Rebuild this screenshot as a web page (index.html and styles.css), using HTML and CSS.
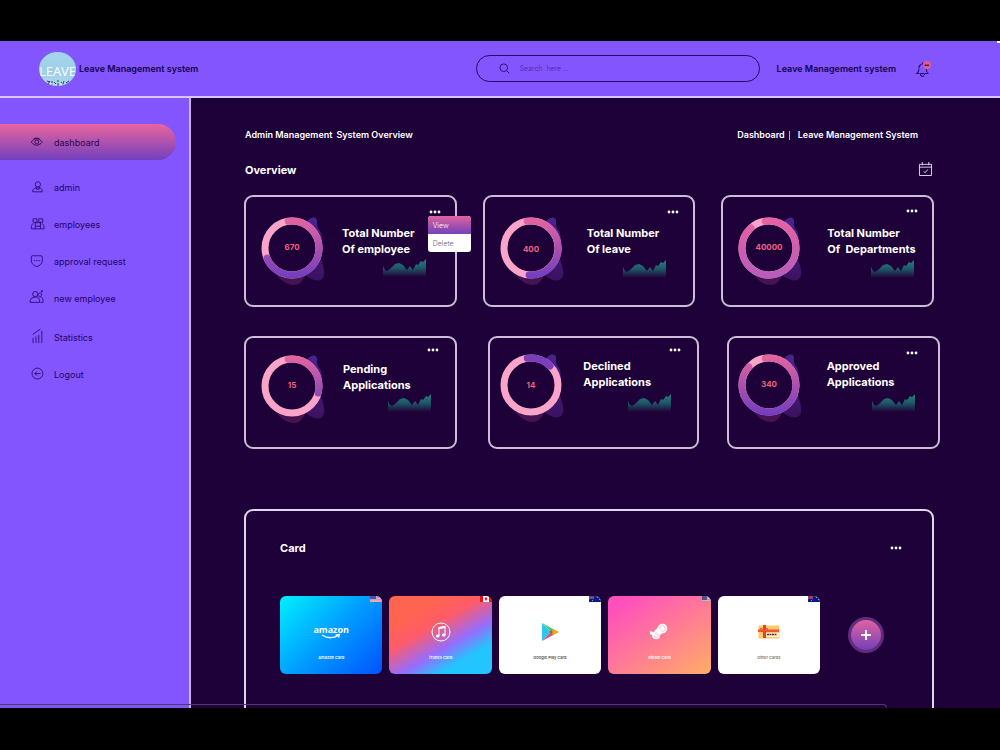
FILE: index.html
```html
<!DOCTYPE html>
<html lang="en">
<head>
<meta charset="utf-8">
<title>Leave Management system</title>
<link rel="stylesheet" href="styles.css">
</head>
<body>
<svg class="defs" width="0" height="0" aria-hidden="true">
  <defs>
    <linearGradient id="ring-full" gradientUnits="userSpaceOnUse" x1="0" y1="0" x2="0" y2="62"><stop offset="0" stop-color="#e8659f"/><stop offset="1" stop-color="#6f3cc0"/></linearGradient>
    <linearGradient id="ring-soft" gradientUnits="userSpaceOnUse" x1="0" y1="0" x2="0" y2="62"><stop offset="0" stop-color="#ea62a0"/><stop offset="1" stop-color="#b65cbc"/></linearGradient>
    <linearGradient id="ring-short" gradientUnits="userSpaceOnUse" x1="0" y1="0" x2="0" y2="42"><stop offset="0" stop-color="#e8659f"/><stop offset="1" stop-color="#8a48b8"/></linearGradient>
    <linearGradient id="blob-fill" x1="0" y1="0" x2="0" y2="1"><stop offset="0" stop-color="#4a2390"/><stop offset="1" stop-color="#3b1260"/></linearGradient>
    <linearGradient id="spark-fill" x1="0" y1="0" x2="0" y2="1"><stop offset="0" stop-color="#2a7f86"/><stop offset=".5" stop-color="#1f5767"/><stop offset="1" stop-color="#1e0138"/></linearGradient>
    <symbol id="ring-base" viewBox="0 0 68 70">
      <path fill="url(#blob-fill)" d="M44 7C48 1 54-2 56 3c0 5 0 8 3 11 4 8 0 18 1 28 3 9 5 16 1 20-4 3-9 1-14-2l-8-6z"/>
      <path fill="#451450" d="M14 56h32c-4 6-6 12-13 12-9 0-14-6-19-12z"/>
      <circle cx="31" cy="31" r="27" fill="#1e0138" stroke="#f9a5c9" stroke-width="7"/>
    </symbol>
    <symbol id="spark" viewBox="0 0 43 18"><path fill="url(#spark-fill)" d="M0 7l2 4 2 1 3-2 5-5 4-1 4 2 4 5 3-4 3 4 3-6 2 1 3-4 2 1 3-3v18H0z"/></symbol>
    <symbol id="dots" viewBox="0 0 12 4"><g fill="#fff"><circle cx="2" cy="2" r="1.400"/><circle cx="6" cy="2" r="1.400"/><circle cx="10" cy="2" r="1.400"/></g></symbol>
    <symbol id="flag-uk" viewBox="0 0 12 6"><path fill="#0a1a86" d="M0 0h12v6H0z"/><path stroke="#b86a9c" stroke-width=".8" d="M0 0l5 3M5 0L0 3"/><path stroke="#e03050" stroke-width=".8" d="M2.500 0v3M0 1.500h5"/><path fill="#8c96d0" d="M8 1h1v1H8zM10 3h1v1h-1zM3 4h1v1H3z"/></symbol>
  </defs>
</svg>
<div class="screen">
  <header class="topbar">
    <div class="brand">
      <div class="logo"><span class="logo-word">LEAVE</span><svg class="logo-crowd" viewBox="0 0 24 6"><path d="M1 1l3 1M2 4l2-3M6 1v4M8 2l2 2M11 1h2M12 3v3M15 2l2 3M18 1l-1 3M20 3l3-2" fill="none" stroke="#26445c"/><path d="M4 4h3M14 4h3" stroke="#e8fbff"/></svg></div>
      <span class="brand-name">Leave Management system</span>
    </div>
    <label class="search">
      <svg class="search-icon" viewBox="0 0 12 12"><circle cx="5.200" cy="5.200" r="4.200"/><path d="M8.200 8.200l3 3"/></svg>
      <input type="text" placeholder="Search  here ..." aria-label="Search">
    </label>
    <span class="user-name">Leave Management system</span>
    <button class="bell" aria-label="Notifications">
      <svg viewBox="0 0 16 18"><path d="M1 13.500c1.500-1 2-3 2-5.500 0-3 2-4 3.500-4s4 2 4 4c0 3 0 4.500 2 5.500zM7 4V2M4.500 14c0 3 4 3 4 0" fill="none" stroke="#290a70" stroke-width="1.100" stroke-dasharray="5 .6"/><circle cx="11" cy="5" r="4.200" fill="#d95c96"/><path d="M8.500 5.500h4.500M9.500 4l1 2M12 4v2" stroke="#5c1745"/></svg>
    </button>
  </header>
  <div class="body">
    <nav class="sidebar">
      <a class="nav-item active" href="#"><svg viewBox="0 0 16 16"><path d="M1.500 8C4.500 3 10.500 3 14 8c-3.500 5-9.500 5-12.500 0zM4 4.500c2-1.300 5-1.300 7 0"/><circle cx="7.800" cy="8" r="2.300"/></svg>dashboard</a>
      <a class="nav-item" href="#"><svg viewBox="0 0 16 16"><circle cx="9" cy="5" r="3"/><path d="M3 13.500c0-4 3-4.500 6-4.500s5 .5 5 4.500zM7 8v2l2 1 2-1V8"/></svg>admin</a>
      <a class="nav-item" href="#"><svg viewBox="0 0 16 16"><path d="M3.500 2h4.500v4H3.500zM10 2h4.500v4H10zM6 6.500h6v4H6zM4 7c-2 1-2.500 3-2.500 6.500H16c.5-3.500-1-5.500-2.500-6.500M5.500 13.500l1-3M12.500 13.500l-1-3"/></svg>employees</a>
      <a class="nav-item" href="#"><svg viewBox="0 0 16 16"><path d="M2.500 2H12.500q1.500 0 1.500 1.500V8c0 3-3 5.500-6.200 6.500C4.500 13.500 1.500 11 1.500 8V3.500Q1.500 2 2.500 2z"/><path d="M4.500 7.500H6M7 7.500h1.500M9.800 7.500h1.500"/></svg>approval request</a>
      <a class="nav-item" href="#"><svg viewBox="0 0 16 16"><circle cx="6" cy="3.500" r="3"/><path d="M0 13c0-4 2-6 6-6s5 1 5 6zM10 6.500c-2-4 2-5 3-3.500 1 2-.5 3.500-2 3.500 3 0 4 2 4 6.500h-3M13.500-1v2.500M12.300.200h2.400"/></svg>new employee</a>
      <a class="nav-item spaced" href="#"><svg viewBox="0 0 16 16"><path d="M3.500 15V9M6.800 15V7.500M10 15V5.500M13.500 15V1M3 5l9-6"/></svg>Statistics</a>
      <a class="nav-item" href="#"><svg viewBox="0 0 16 16"><circle cx="8.500" cy="7.500" r="6.200"/><path d="M12 7.500H5.500M8 5L5.500 7.500 8 10"/></svg>Logout</a>
    </nav>
    <main class="main">
      <div class="crumbs">
        <span class="crumb-left"><span>Admin Management</span><span>System Overview</span></span>
        <span class="crumb-right"><a href="#">Dashboard</a><i class="divider"></i><a href="#">Leave Management System</a></span>
      </div>
      <div class="overview-head">
        <h1>Overview</h1>
        <svg class="calendar" viewBox="0 0 14 15"><path d="M.5 2.500h13v12H.5zM.5 5.500h13M3.500 0v3.500M10.500 0v3.500M5 10l1.500 1.500L9.500 8" fill="none" stroke="#e8ddf0"/></svg>
      </div>
      <section class="stats first">
        <article class="stat s1">
          <svg class="ring" viewBox="0 0 68 70"><use href="#ring-base"/><path class="arc" stroke="url(#ring-full)" d="M27.200 4.300A27 27 0 1 1 6 41.100"/><text x="31" y="33">670</text></svg>
          <div class="info"><h2>Total Number<br>Of employee</h2><svg class="spark"><use href="#spark"/></svg></div>
          <button class="more" aria-label="More"><svg><use href="#dots"/></svg></button>
          <div class="menu"><button class="menu-item view">View</button><button class="menu-item">Delete</button></div>
        </article>
        <article class="stat s2">
          <svg class="ring" viewBox="0 0 68 70"><use href="#ring-base"/><path class="arc" stroke="url(#ring-full)" d="M27.200 4.300A27 27 0 1 1 29.100 57.900"/><text x="31" y="35">400</text></svg>
          <div class="info"><h2>Total Number<br>Of leave</h2><svg class="spark"><use href="#spark"/></svg></div>
          <button class="more" aria-label="More"><svg><use href="#dots"/></svg></button>
        </article>
        <article class="stat s3">
          <svg class="ring" viewBox="0 0 68 70"><use href="#ring-base"/><path class="arc" stroke="url(#ring-soft)" d="M27.200 4.300A27 27 0 1 1 12.900 10.900"/><text x="31" y="33">40000</text></svg>
          <div class="info"><h2>Total Number<br>Of&nbsp; Departments</h2><svg class="spark"><use href="#spark"/></svg></div>
          <button class="more" aria-label="More"><svg><use href="#dots"/></svg></button>
        </article>
      </section>
      <section class="stats second">
        <article class="stat s4">
          <svg class="ring" viewBox="0 0 68 70"><use href="#ring-base"/><path class="arc" stroke="url(#ring-short)" d="M27.200 4.300A27 27 0 0 1 57.100 38"/><text x="31" y="33">15</text></svg>
          <div class="info"><h2>Pending<br>Applications</h2><svg class="spark"><use href="#spark"/></svg></div>
          <button class="more" aria-label="More"><svg><use href="#dots"/></svg></button>
        </article>
        <article class="stat s5">
          <svg class="ring" viewBox="0 0 68 70"><use href="#ring-base"/><path class="arc" stroke="#7a3dbb" d="M27.200 4.300A27 27 0 0 1 50 12"/><text x="31" y="34">14</text></svg>
          <div class="info"><h2>Declined<br>Applications</h2><svg class="spark"><use href="#spark"/></svg></div>
          <button class="more" aria-label="More"><svg><use href="#dots"/></svg></button>
        </article>
        <article class="stat s6">
          <svg class="ring" viewBox="0 0 68 70"><use href="#ring-base"/><path class="arc" stroke="url(#ring-full)" d="M27.200 4.300A27 27 0 1 1 10.900 12.900"/><text x="31" y="33">340</text></svg>
          <div class="info"><h2>Approved<br>Applications</h2><svg class="spark"><use href="#spark"/></svg></div>
          <button class="more" aria-label="More"><svg><use href="#dots"/></svg></button>
        </article>
      </section>
      <section class="wallet">
        <div class="wallet-head"><h2>Card</h2><button class="more" aria-label="More"><svg><use href="#dots"/></svg></button></div>
        <div class="wallet-body">
          <div class="gifts">
            <article class="gift amazon">
              <svg class="flag" viewBox="0 0 12 6"><path fill="#f4a0b4" d="M0 0h12v6H0z"/><path stroke="#b9a0c8" d="M0 1.500h12M0 3.500h12"/><path fill="#3d5aa5" d="M0 0h6v3H0z"/></svg>
              <div class="art"><span class="amazon-word">amazon</span><svg class="smile" viewBox="0 0 20 5"><path d="M1 1c5 3.500 12 3.500 16 .5M14.500.8l4-.3-1 3" fill="none" stroke="#fff" stroke-width="1.200"/></svg></div>
              <p>Amazon Card</p>
            </article>
            <article class="gift itunes">
              <svg class="flag" viewBox="0 0 12 6"><path fill="#e8101c" d="M0 0h12v6H0z"/><path fill="#fff" d="M3 0h6v6H3z"/><path fill="#e8101c" d="M6 1l1.500 1.500L6 5 4.500 2.500z"/></svg>
              <div class="art"><svg width="20" height="20" viewBox="0 0 20 20"><circle cx="10" cy="10" r="9" fill="none" stroke="#fff"/><path d="M8 14V5.500l6-1.200V13" fill="none" stroke="#fff"/><path fill="#fff" d="M7.500 5.300l7-1.400v2l-7 1.400z"/><ellipse cx="6.700" cy="14" rx="1.900" ry="1.500" fill="#fff"/><ellipse cx="12.700" cy="13" rx="1.900" ry="1.500" fill="#fff"/></svg></div>
              <p>iTunes Card</p>
            </article>
            <article class="gift play">
              <svg class="flag"><use href="#flag-uk"/></svg>
              <div class="art"><svg width="18" height="20" viewBox="0 0 18 20"><path fill="#29c9ee" d="M1 1v18l9-9z"/><path fill="#4ecb71" d="M1 1l12 6.500L10 10z"/><path fill="#e8456b" d="M1 19l12-6.500L10 10z"/><path fill="#f8a31c" d="M12.500 7L18 10l-5.500 3-3-3z"/><path fill="#9a6a3a" d="M10 8l2 2-2 2-1.500-2z"/></svg></div>
              <p>Google Play Card</p>
            </article>
            <article class="gift steam">
              <svg class="flag" viewBox="0 0 12 6"><path fill="#f4a0b4" d="M3 0h9v6H3z"/><path stroke="#b494a8" d="M3 3.500h9M3 5.500h9"/><path fill="#554d91" d="M3 0h5v4H3z"/></svg>
              <div class="art"><svg width="18" height="18" viewBox="0 0 18 18"><circle cx="12.500" cy="5.500" r="4.800" fill="#fff"/><circle cx="12.500" cy="5.500" r="2.800" fill="none" stroke="#fbb9c2"/><path fill="#fff" d="M8 4l5 6-4.500 3L4 8.500z"/><circle cx="6" cy="12.500" r="3.800" fill="#fff"/><path fill="#fff" d="M0 8l6 2-1 4-5-3z"/><path d="M3.500 12.500c1 3 5 2.500 4.500-.5-.5-2-2-2-3-1.500" fill="none" stroke="#fba9b4" stroke-width=".8"/></svg></div>
              <p>Steam Card</p>
            </article>
            <article class="gift other">
              <svg class="flag"><use href="#flag-uk"/></svg>
              <div class="art"><svg width="22" height="14" viewBox="0 0 22 14"><rect x=".5" y=".5" width="21" height="13" rx="1" fill="#fdc868"/><path fill="#fff1d0" d="M8 8h13v4H8z"/><path fill="#f0553a" d="M0 4.500h21v2.500H0z"/><path fill="#e8402f" d="M5 0h3v13H5z"/><path d="M5.500 5C1 1 1 6.500 5.500 6c5 1 6-5 1-1" fill="#fa8c4b" stroke="#e3402c"/><path stroke="#5b2540" stroke-width="1.600" d="M9 9.500h10" stroke-dasharray="2 .5"/></svg></div>
              <p>Other Cards</p>
            </article>
          </div>
          <button class="add" aria-label="Add card"><svg viewBox="0 0 12 12"><path d="M6 1v10M1 6h10" stroke="#fff" stroke-width="1.800"/></svg></button>
        </div>
      </section>
    </main>
  </div>
  <div class="under-edge"></div>
</div>
</body>
</html>
```
FILE: styles.css
```css
* { box-sizing: border-box; }
body {
  margin: 0;
  height: 100vh;
  padding: 41px 0 42px;
  background: #000;
  color: #fff;
  font-family: Inter, "Liberation Sans", sans-serif;
}
h1, h2, p { margin: 0; }
a { color: inherit; text-decoration: none; }
button { border: 0; padding: 0; background: none; color: inherit; font: inherit; }
svg { display: block; overflow: visible; }
.defs { position: absolute; }

.screen {
  position: relative;
  display: flex;
  flex-direction: column;
  height: 100%;
  overflow: hidden;
  background: #1e0138;
}
.screen::after {
  content: "";
  position: absolute;
  top: 0;
  right: 0;
  width: 3px;
  height: 2px;
  background: #fff;
}

.topbar {
  display: flex;
  align-items: center;
  flex: none;
  height: 57px;
  padding: 0 68px 0 39px;
  border-bottom: 2px solid #dac6fa;
  background: #8255ff;
  color: #16014a;
  font-size: 9px;
  font-weight: 600;
}
.brand { display: flex; align-items: center; gap: 3px; margin-right: auto; }
.logo {
  position: relative;
  width: 37px;
  height: 34px;
  padding-top: 9px;
  border-radius: 50%;
  overflow: hidden;
  background: linear-gradient(#a5d5ec, #9fd0e8 60%, #b0d6ea);
}
.logo-word {
  display: block;
  color: #f4fcff;
  font: 400 13px/20px "Noto Sans", sans-serif;
  text-align: center;
}
.logo-crowd { position: absolute; left: 7px; bottom: 0; width: 24px; height: 6px; }
.search {
  display: flex;
  align-items: center;
  gap: 10px;
  flex: 0 1 284px;
  height: 27px;
  margin-right: 17px;
  padding: 0 22px;
  border: 1px solid #270668;
  border-radius: 14px;
}
.search-icon { flex: none; width: 11px; height: 11px; fill: none; stroke: #2b0b78; }
.search input {
  flex: 1;
  min-width: 0;
  border: 0;
  padding: 0;
  outline: 0;
  background: none;
  color: #2b0b78;
  font: 300 7px/12px Inter, sans-serif;
}
.search input::placeholder { color: #4a26ad; opacity: 1; }
.bell { width: 16px; height: 18px; margin-left: 20px; }

.body { display: flex; flex: 1; min-height: 0; }
.sidebar {
  display: flex;
  flex-direction: column;
  gap: 1px;
  flex: none;
  width: 191px;
  padding-top: 26px;
  border-right: 2px solid #cbb2fb;
  background: #8255ff;
}
.nav-item {
  display: flex;
  align-items: center;
  gap: 10px;
  height: 36px;
  padding-left: 30px;
  color: #240464;
  font-size: 9px;
}
.nav-item svg { width: 14px; height: 14px; fill: none; stroke: #2b0a70; stroke-width: 1; }
.nav-item.active {
  width: 176px;
  margin-bottom: 8px;
  border-radius: 0 18px 18px 0;
  background: linear-gradient(#e9659f, #7240bd);
  color: #2a0650;
}
.nav-item.active svg { stroke: #2a0650; }
.nav-item.spaced { margin-top: 2px; }

.main { flex: 1; min-width: 0; padding: 30px 60px 0 53px; overflow: hidden; }
.crumbs {
  display: flex;
  justify-content: space-between;
  padding: 0 22px 0 1px;
  font-size: 9px;
  font-weight: 600;
  line-height: 14px;
}
.crumb-left { display: flex; gap: 4px; }
.crumb-right { display: flex; align-items: center; }
.divider { width: 1px; height: 9px; margin: 0 8px 0 4px; background: #b9a9c6; }
.overview-head {
  display: flex;
  align-items: flex-start;
  justify-content: space-between;
  margin-top: 20px;
  padding: 0 8px 0 1px;
}
h1 { font-size: 11px; line-height: 17px; }
.calendar { width: 13px; height: 14px; }

.stats { display: grid; grid-template-columns: repeat(3, 1fr); }
.stats.first { column-gap: 26px; margin: 16px 6px 29px 0; }
.stats.second { column-gap: 28px; }
.stat {
  position: relative;
  display: flex;
  align-items: flex-start;
  min-width: 0;
  min-height: 112px;
  border: 2px solid #cdbdd8;
  border-radius: 9px;
}
.stats.second .stat { min-height: 113px; }
.ring { flex: none; width: 68px; height: 70px; margin: 20px 0 0 15px; }
.arc { fill: none; stroke-width: 7; stroke-linecap: round; }
.ring text {
  fill: #f0607f;
  font-size: 8px;
  font-weight: 700;
  text-anchor: middle;
}
.info { padding: 28px 0 0 13px; }
.info h2 { font-size: 11px; line-height: 16px; white-space: nowrap; }
.spark { width: 43px; height: 18px; margin: 2px 0 0 41px; }
.more { position: absolute; top: 13px; right: 14px; }
.more svg { width: 12px; height: 4px; }

.s2 .info { padding-left: 19px; }
.s2 .spark { margin: 3px 0 0 36px; }
.s3 .info { padding-left: 21px; }
.s3 .spark { margin: 3px 0 0 44px; }
.s3 .more { top: 12px; }
.stats.second .ring { margin-top: 16px; }
.stats.second .info { padding-top: 20px; }
.stats.second .spark { margin: 4px 0 0 45px; }
.stats.second .more { top: 10px; right: 16px; }
.stats.second .s4 .ring { margin-top: 17px; }
.stats.second .s4 .info { padding: 23px 0 0 14px; }
.stats.second .s4 .spark { margin-top: 1px; }
.s5 { margin-left: 3px; }
.s5 .ring { margin-left: 10px; }
.s6 .ring { margin-left: 9px; }
.s6 .info { padding-left: 21px; }
.s5 .info { padding-left: 15px; }
.stats.second .s6 .more { top: 13px; right: 20px; }

.menu {
  position: absolute;
  z-index: 1;
  top: 19px;
  right: -16px;
  display: flex;
  flex-direction: column;
  width: 43px;
  border-radius: 3px;
  overflow: hidden;
  background: #fff;
}
.menu-item {
  height: 18px;
  padding-left: 5px;
  color: #6d6678;
  font-size: 7px;
  font-weight: 300;
  text-align: left;
}
.menu-item.view { background: linear-gradient(#dd629f, #7442ba); color: #fff; }

.wallet {
  min-height: 220px;
  margin: 60px 6px 0 0;
  padding-top: 29px;
  border: 2px solid #e2d5ec;
  border-radius: 9px;
}
.wallet-head { display: flex; align-items: center; justify-content: space-between; padding: 0 30px 0 34px; }
.wallet-head h2 { font-size: 11px; line-height: 16px; }
.wallet-head .more { position: static; }
.wallet-body { display: flex; align-items: center; gap: 28px; margin-top: 40px; padding: 0 48px 0 34px; }
.gifts { display: grid; grid-template-columns: repeat(5, 1fr); gap: 7px; flex: 1; }
.gift {
  position: relative;
  height: 78px;
  padding-top: 13px;
  border-radius: 6px;
  overflow: hidden;
  background: #fff;
  text-align: center;
}
.flag { position: absolute; top: 0; right: 0; width: 12px; height: 6px; }
.art {
  display: flex;
  flex-direction: column;
  align-items: center;
  justify-content: center;
  height: 46px;
}
.gift p { font-size: 4px; font-weight: 600; line-height: 6px; }
.amazon { background: linear-gradient(135deg, #00f0ff, #009dff 50%, #0052ff); }
.amazon-word { font: 700 9px/9px "Open Sans", sans-serif; }
.smile { width: 20px; height: 5px; }
.itunes { background: linear-gradient(150deg, #ff6450 22%, #ff5b69 40%, #986cfa 61%, #22c5ff 78%); }
.play { color: #555; }
.steam { background: linear-gradient(145deg, #ff4fbd 10%, #ff7997 50%, #ffad66); }
.other { color: #777; }
.add {
  display: flex;
  align-items: center;
  justify-content: center;
  flex: none;
  width: 36px;
  height: 36px;
  border: 3px solid #622b7c;
  border-radius: 50%;
  background: linear-gradient(#e0629f, #7440ba);
}
.add svg { width: 12px; height: 12px; }
.under-edge {
  position: absolute;
  left: 0;
  right: 113px;
  bottom: 0;
  height: 4px;
  border: solid #513a68;
  border-width: 1px 1px 0 0;
  border-radius: 0 4px 0 0;
}
```
